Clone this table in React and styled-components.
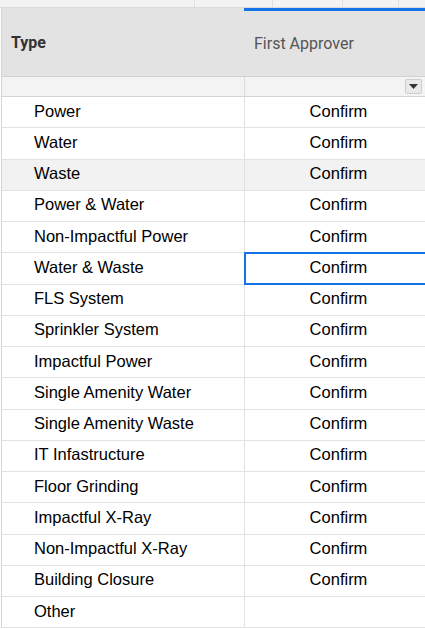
import React from "react";
import styled, { createGlobalStyle } from "styled-components";

const GlobalStyle = createGlobalStyle`
  html, body {
    margin: 0;
    padding: 0;
    background: #fff;
  }
  body {
    font-family: "Liberation Sans", Arial, sans-serif;
  }
`;

const rows = [
  { type: "Power", approver: "Confirm" },
  { type: "Water", approver: "Confirm" },
  { type: "Waste", approver: "Confirm", hover: true },
  { type: "Power & Water", approver: "Confirm" },
  { type: "Non-Impactful Power", approver: "Confirm" },
  { type: "Water & Waste", approver: "Confirm", selected: true },
  { type: "FLS System", approver: "Confirm" },
  { type: "Sprinkler System", approver: "Confirm" },
  { type: "Impactful Power", approver: "Confirm" },
  { type: "Single Amenity Water", approver: "Confirm" },
  { type: "Single Amenity Waste", approver: "Confirm" },
  { type: "IT Infastructure", approver: "Confirm" },
  { type: "Floor Grinding", approver: "Confirm" },
  { type: "Impactful X-Ray", approver: "Confirm" },
  { type: "Non-Impactful X-Ray", approver: "Confirm" },
  { type: "Building Closure", approver: "Confirm" },
  { type: "Other", approver: "" },
];

// widths of the column strip above the header
const stripCols = [194, 77, 69, 55, 40];

function App() {
  return (
    <Page>
      <GlobalStyle />
      <Strip>
        {stripCols.map((w, i) => (
          <StripCell key={i} style={{ width: w }} />
        ))}
      </Strip>
      <Grid>
        <HeadCell $bold>Type</HeadCell>
        <HeadCell $active>First Approver</HeadCell>
        <FilterCell />
        <FilterCell>
          <DropButton>
            <svg width="9" height="5" viewBox="0 0 9 5">
              <path d="M0 0h9L4.5 5z" fill="#333" />
            </svg>
          </DropButton>
        </FilterCell>
        {rows.map((r) => (
          <React.Fragment key={r.type}>
            <TypeCell $hover={r.hover}>{r.type}</TypeCell>
            <ValueCell $hover={r.hover} $selected={r.selected}>
              {r.approver}
            </ValueCell>
          </React.Fragment>
        ))}
      </Grid>
    </Page>
  );
}

const Page = styled.div`
  width: 425px;
  height: 629px;
  overflow: hidden;
  background: #fff;
`;

const Strip = styled.div`
  display: flex;
  height: 7px;
  background: #f3f3f3;
  border-bottom: 1px solid #dcdcdc;
`;

const StripCell = styled.div`
  flex: none;
  border-right: 1px solid #dedede;
`;

const Grid = styled.div`
  display: grid;
  grid-template-columns: 243px 188px;
  grid-template-rows: 69px 20px repeat(17, 31.25px);
  margin-left: 1px;
  border-left: 1px solid #d6d6d6;
  width: 432px;
`;

const HeadCell = styled.div`
  display: flex;
  align-items: center;
  padding-left: 9px;
  background: #e3e3e3;
  border-right: 1px solid #d2d2d2;
  border-bottom: 1px solid #d2d2d2;
  font-family: Roboto, "Liberation Sans", sans-serif;
  font-size: 16px;
  font-weight: ${(p) => (p.$bold ? 700 : 400)};
  color: ${(p) => (p.$bold ? "#333" : "#555")};
  ${(p) =>
    p.$active &&
    `
    border-top: 3px solid #1473e6;
    margin-left: -1px;
    padding-left: 10px;
  `}
`;

const FilterCell = styled.div`
  position: relative;
  background: #f3f3f3;
  border-right: 1px solid #dcdcdc;
  border-bottom: 1px solid #d4d4d4;
`;

const DropButton = styled.div`
  position: absolute;
  left: 160px;
  top: 2px;
  width: 17px;
  height: 15px;
  box-sizing: border-box;
  border: 1px solid #cfcfcf;
  border-radius: 2px;
  background: #e9e9e9;
  display: flex;
  align-items: center;
  justify-content: center;
`;

const BodyCell = styled.div`
  display: flex;
  align-items: center;
  box-sizing: border-box;
  padding-bottom: 2px;
  font-size: 16.5px;
  color: #000;
  background: ${(p) => (p.$hover ? "#f2f2f2" : "#fff")};
  border-right: 1px solid #e2e2e2;
  border-bottom: 1px solid #e2e2e2;
`;

const TypeCell = styled(BodyCell)`
  padding-left: 32px;
`;

const ValueCell = styled(BodyCell)`
  justify-content: center;
  ${(p) =>
    p.$selected &&
    `
    border: 2px solid #1473e6;
    margin-left: -1px;
    margin-top: -1px;
  `}
`;

export default App;
